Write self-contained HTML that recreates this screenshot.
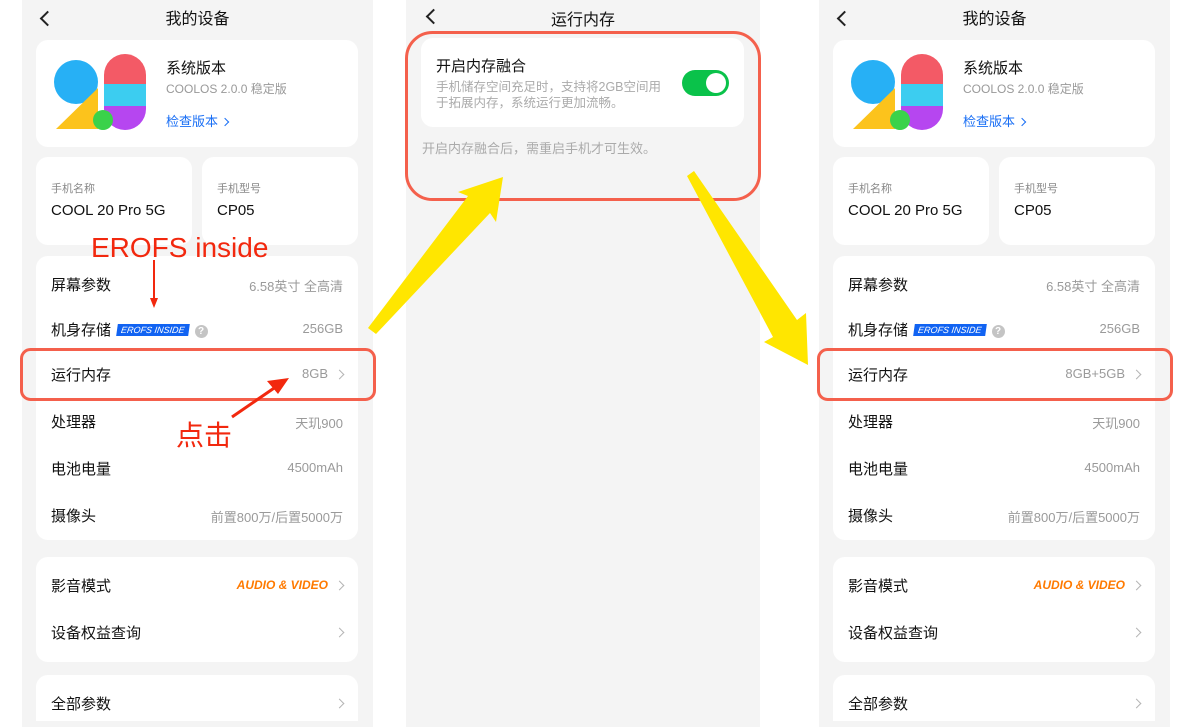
<!DOCTYPE html>
<html><head><meta charset="utf-8">
<style>
*{margin:0;padding:0;box-sizing:border-box}
body{width:1200px;height:727px;background:#fff;position:relative;overflow:hidden;font-family:"Liberation Sans","Noto Sans CJK SC",sans-serif;color:#111}
.ph{position:absolute;top:0;height:727px;background:#f4f4f4;overflow:hidden}
.a{position:absolute}
.card{position:absolute;background:#fff;border-radius:12px}
.title{position:absolute;top:5px;width:100%;text-align:center;font-size:16px;color:#111}
.back{position:absolute;left:20px;top:13px;width:11px;height:11px;border-left:2px solid #222;border-bottom:2px solid #222;transform:rotate(45deg)}
.lbl{position:absolute;left:15px;font-size:15px;color:#111}
.val{position:absolute;right:15px;font-size:13px;color:#9a9a9a;text-align:right}
.chev{display:inline-block;width:7px;height:7px;border-right:1.3px solid #b5b5b5;border-top:1.3px solid #b5b5b5;transform:rotate(45deg);margin-left:8px;vertical-align:0px}
.tag{display:inline-block;background:#1163f2;color:#fff;font-size:9px;font-style:italic;padding:0 4px;margin-left:6px;vertical-align:2px;line-height:12px;transform:skewX(-8deg)}
.q{display:inline-block;width:13px;height:13px;border-radius:50%;background:#c4c4c4;color:#fff;font-size:10px;text-align:center;line-height:13px;margin-left:6px;vertical-align:1px;font-weight:bold}
.av{color:#ff7a00;font-style:italic;font-weight:bold;font-size:12px}
</style></head><body>

<!-- LEFT PANEL -->
<div class="ph" style="left:22px;width:351px">
 <div class="back"></div><div class="title">我的设备</div>
 <div class="card" style="left:14px;top:40px;width:322px;height:107px">
  <svg class="a" style="left:0;top:0" width="120" height="107">
   <circle cx="40" cy="42" r="22" fill="#27b0f5"/>
   <polygon points="20,89 62,48 62,89" fill="#fcc31c"/>
   <path d="M68 35 a21 21 0 0 1 42 0 v9 h-42z" fill="#f35a66"/>
   <rect x="68" y="44" width="42" height="22" fill="#3ccdf0"/>
   <path d="M68 66 h42 v3 a21 21 0 0 1 -42 0z" fill="#b646f0"/>
   <circle cx="67" cy="80" r="10" fill="#3ad24a"/>
  </svg>
  <div class="a" style="left:130px;top:17px;font-size:15px">系统版本</div>
  <div class="a" style="left:130px;top:40px;font-size:12px;color:#999">COOLOS 2.0.0 稳定版</div>
  <div class="a" style="left:130px;top:71px;font-size:13px;color:#1a6ff5">检查版本 <span style="display:inline-block;width:6px;height:6px;border-right:1.3px solid #1a6ff5;border-top:1.3px solid #1a6ff5;transform:rotate(45deg);vertical-align:1px"></span></div>
 </div>
 <div class="card" style="left:14px;top:157px;width:156px;height:88px">
  <div class="a" style="left:15px;top:23px;font-size:11px;color:#888">手机名称</div>
  <div class="a" style="left:15px;top:45px;font-size:15px">COOL 20 Pro 5G</div>
 </div>
 <div class="card" style="left:180px;top:157px;width:156px;height:88px">
  <div class="a" style="left:15px;top:23px;font-size:11px;color:#888">手机型号</div>
  <div class="a" style="left:15px;top:45px;font-size:15px">CP05</div>
 </div>
 <div class="card" style="left:14px;top:256px;width:322px;height:284px">
  <div class="lbl" style="top:18px">屏幕参数</div><div class="val" style="top:20px">6.58英寸 全高清</div>
  <div class="lbl" style="top:63px">机身存储<span class="tag">EROFS INSIDE</span><span class="q">?</span></div><div class="val" style="top:65px">256GB</div>
  <div class="lbl" style="top:108px">运行内存</div><div class="val" style="top:110px">8GB<span class="chev"></span></div>
  <div class="lbl" style="top:155px">处理器</div><div class="val" style="top:157px">天玑900</div>
  <div class="lbl" style="top:202px">电池电量</div><div class="val" style="top:204px">4500mAh</div>
  <div class="lbl" style="top:249px">摄像头</div><div class="val" style="top:251px">前置800万/后置5000万</div>
 </div>
 <div class="card" style="left:14px;top:557px;width:322px;height:105px">
  <div class="lbl" style="top:18px">影音模式</div><div class="val" style="top:20px"><span class="av">AUDIO &amp; VIDEO</span><span class="chev"></span></div>
  <div class="lbl" style="top:65px">设备权益查询</div><div class="val" style="top:67px"><span class="chev"></span></div>
 </div>
 <div class="card" style="left:14px;top:675px;width:322px;height:46px;border-radius:12px 12px 0 0">
  <div class="lbl" style="top:18px">全部参数</div><div class="val" style="top:20px"><span class="chev"></span></div>
 </div>
</div>

<!-- MIDDLE PANEL -->
<div class="ph" style="left:406px;width:354px">
 <div class="back" style="left:22px;top:11px"></div><div class="title" style="top:6px">运行内存</div>
 <div class="card" style="left:15px;top:38px;width:323px;height:89px">
  <div class="a" style="left:15px;top:17px;font-size:15px;color:#111">开启内存融合</div>
  <div class="a" style="left:15px;top:41px;font-size:12.5px;color:#aaa;line-height:16px;width:236px">手机储存空间充足时，支持将2GB空间用于拓展内存，系统运行更加流畅。</div>
  <div class="a" style="left:261px;top:32px;width:47px;height:26px;border-radius:13px;background:#0ac24a"><div class="a" style="right:3px;top:3px;width:20px;height:20px;border-radius:50%;background:#fff"></div></div>
 </div>
 <div class="a" style="left:16px;top:138px;font-size:13px;color:#aaa">开启内存融合后，需重启手机才可生效。</div>
</div>

<!-- RIGHT PANEL -->
<div class="ph" style="left:819px;width:351px">
 <div class="back"></div><div class="title">我的设备</div>
 <div class="card" style="left:14px;top:40px;width:322px;height:107px">
  <svg class="a" style="left:0;top:0" width="120" height="107">
   <circle cx="40" cy="42" r="22" fill="#27b0f5"/>
   <polygon points="20,89 62,48 62,89" fill="#fcc31c"/>
   <path d="M68 35 a21 21 0 0 1 42 0 v9 h-42z" fill="#f35a66"/>
   <rect x="68" y="44" width="42" height="22" fill="#3ccdf0"/>
   <path d="M68 66 h42 v3 a21 21 0 0 1 -42 0z" fill="#b646f0"/>
   <circle cx="67" cy="80" r="10" fill="#3ad24a"/>
  </svg>
  <div class="a" style="left:130px;top:17px;font-size:15px">系统版本</div>
  <div class="a" style="left:130px;top:40px;font-size:12px;color:#999">COOLOS 2.0.0 稳定版</div>
  <div class="a" style="left:130px;top:71px;font-size:13px;color:#1a6ff5">检查版本 <span style="display:inline-block;width:6px;height:6px;border-right:1.3px solid #1a6ff5;border-top:1.3px solid #1a6ff5;transform:rotate(45deg);vertical-align:1px"></span></div>
 </div>
 <div class="card" style="left:14px;top:157px;width:156px;height:88px">
  <div class="a" style="left:15px;top:23px;font-size:11px;color:#888">手机名称</div>
  <div class="a" style="left:15px;top:45px;font-size:15px">COOL 20 Pro 5G</div>
 </div>
 <div class="card" style="left:180px;top:157px;width:156px;height:88px">
  <div class="a" style="left:15px;top:23px;font-size:11px;color:#888">手机型号</div>
  <div class="a" style="left:15px;top:45px;font-size:15px">CP05</div>
 </div>
 <div class="card" style="left:14px;top:256px;width:322px;height:284px">
  <div class="lbl" style="top:18px">屏幕参数</div><div class="val" style="top:20px">6.58英寸 全高清</div>
  <div class="lbl" style="top:63px">机身存储<span class="tag">EROFS INSIDE</span><span class="q">?</span></div><div class="val" style="top:65px">256GB</div>
  <div class="lbl" style="top:108px">运行内存</div><div class="val" style="top:110px">8GB+5GB<span class="chev"></span></div>
  <div class="lbl" style="top:155px">处理器</div><div class="val" style="top:157px">天玑900</div>
  <div class="lbl" style="top:202px">电池电量</div><div class="val" style="top:204px">4500mAh</div>
  <div class="lbl" style="top:249px">摄像头</div><div class="val" style="top:251px">前置800万/后置5000万</div>
 </div>
 <div class="card" style="left:14px;top:557px;width:322px;height:105px">
  <div class="lbl" style="top:18px">影音模式</div><div class="val" style="top:20px"><span class="av">AUDIO &amp; VIDEO</span><span class="chev"></span></div>
  <div class="lbl" style="top:65px">设备权益查询</div><div class="val" style="top:67px"><span class="chev"></span></div>
 </div>
 <div class="card" style="left:14px;top:675px;width:322px;height:46px;border-radius:12px 12px 0 0">
  <div class="lbl" style="top:18px">全部参数</div><div class="val" style="top:20px"><span class="chev"></span></div>
 </div>
</div>

<!-- annotations -->
<div class="a" style="left:91px;top:230px;font-size:28px;color:#f2280e;line-height:36px">EROFS inside</div>
<div class="a" style="left:176px;top:418px;font-size:28px;color:#f2280e;line-height:36px">点击</div>
<svg class="a" style="left:0;top:0" width="1200" height="727">
 <rect x="21.5" y="349.5" width="353" height="50" rx="9" fill="none" stroke="#f4604c" stroke-width="3"/>
 <rect x="818.5" y="349.5" width="353" height="50" rx="9" fill="none" stroke="#f4604c" stroke-width="3"/>
 <rect x="406.5" y="32.5" width="353" height="167" rx="26" fill="none" stroke="#f4604c" stroke-width="3"/>
 <line x1="154" y1="260" x2="154" y2="300" stroke="#f2280e" stroke-width="2"/>
 <polygon points="150,298 158,298 154,308" fill="#f2280e"/>
 <line x1="232" y1="417" x2="280" y2="384" stroke="#f2280e" stroke-width="3"/>
 <polygon points="289,378 267,381 278,394" fill="#f2280e"/>
 <polygon points="368,328 376,334 490,213 496,222 503,177 458,192 468,196" fill="#ffe600"/>
 <polygon points="687,176 694,171 797,320 806,313 808,365 764,342 773,337" fill="#ffe600"/>
</svg>
</body></html>
